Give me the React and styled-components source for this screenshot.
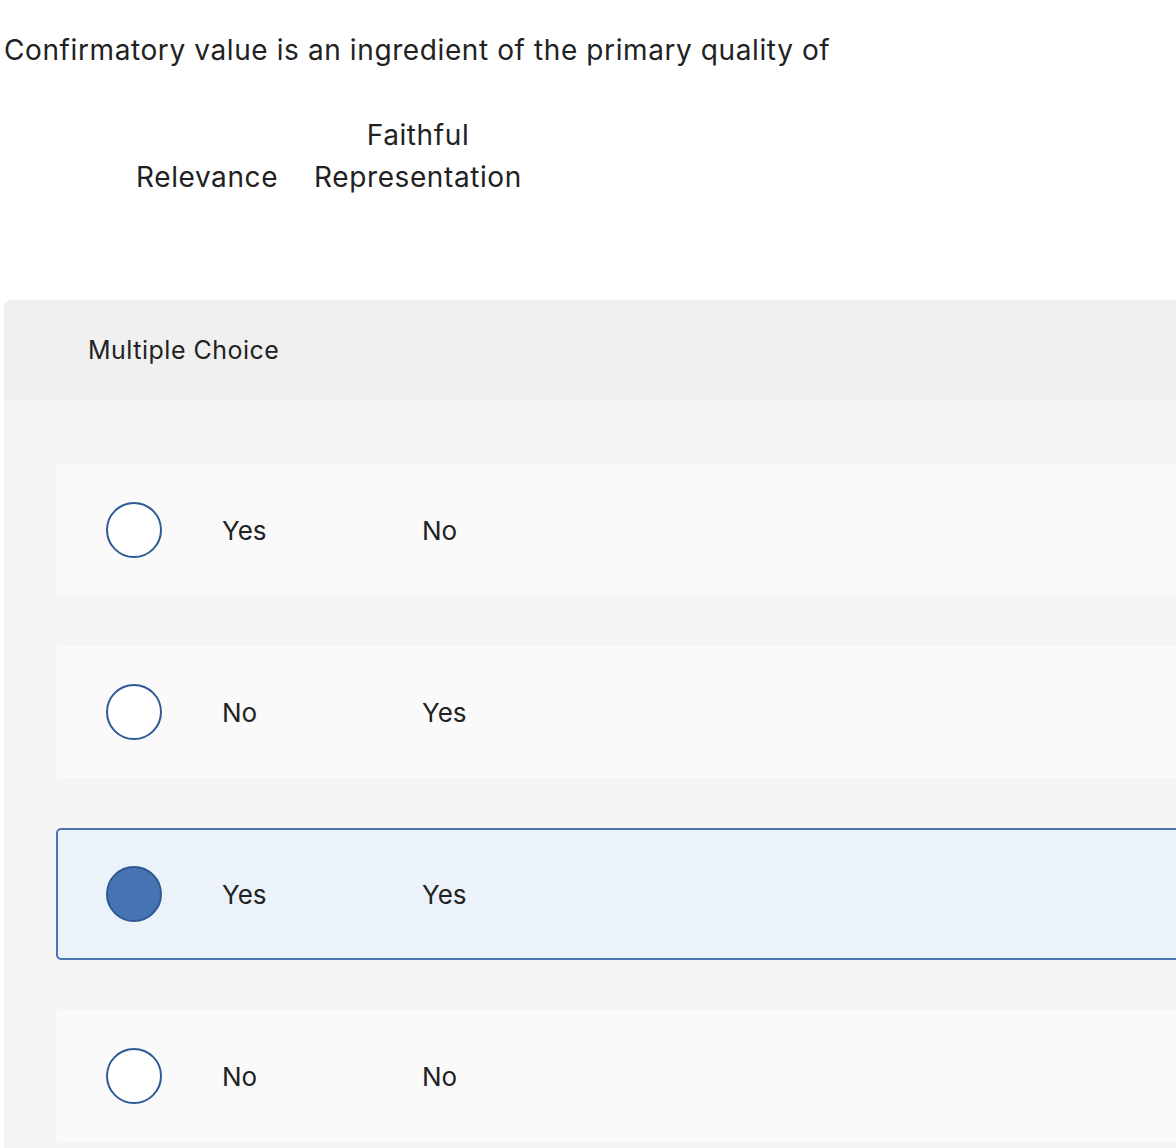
import React from "react";
import styled, { createGlobalStyle } from "styled-components";

const GlobalStyle = createGlobalStyle`
  html, body {
    margin: 0;
    padding: 0;
    background: #fff;
    overflow-x: hidden;
  }
  body {
    font-family: Inter, "Open Sans", sans-serif;
    color: #222;
  }
`;

const Page = styled.div`
  width: 100%;
  overflow: hidden;
`;

const Question = styled.p`
  margin: 0;
  padding: 30px 0 0 4px;
  font-size: 28px;
  line-height: 40px;
  letter-spacing: 0.6px;
  color: #222;
`;

const ValueTable = styled.table`
  margin: 44px 0 0 118px;
  border-collapse: collapse;
  font-size: 28px;
  line-height: 42px;
  letter-spacing: 0.6px;
  color: #222;

  th {
    font-weight: normal;
    text-align: center;
    vertical-align: bottom;
    padding: 0 18px;
  }
`;

const Panel = styled.section`
  margin: 102px -40px 0 4px;
  background: #f5f5f5;
  border-top-left-radius: 6px;
  padding-bottom: 40px;
`;

const PanelHeader = styled.div`
  height: 100px;
  display: flex;
  align-items: center;
  padding-left: 84px;
  background: #f0f0f0;
  border-top-left-radius: 6px;
  font-size: 25px;
  letter-spacing: 0.5px;
  color: #222;
`;

const Options = styled.div`
  display: flex;
  flex-direction: column;
  gap: 50px;
  padding: 64px 0 0 52px;
`;

const Option = styled.label`
  height: 132px;
  box-sizing: border-box;
  display: flex;
  align-items: center;
  padding-left: 48px;
  border-radius: 5px;
  background: ${(p) => (p.$selected ? "#ebf2fa" : "#fafafa")};
  border: 2px solid ${(p) => (p.$selected ? "#4a74b3" : "transparent")};
  cursor: pointer;
  font-size: 26px;
  color: #222;
`;

const Radio = styled.span`
  width: 56px;
  height: 56px;
  box-sizing: border-box;
  border-radius: 50%;
  flex-shrink: 0;
  border: 2px solid #2d5a95;
  background: ${(p) => (p.$checked ? "#4673b1" : "#fff")};
`;

const Cell = styled.span`
  width: ${(p) => p.$width}px;
  flex-shrink: 0;
`;

const choices = [
  ["Yes", "No"],
  ["No", "Yes"],
  ["Yes", "Yes"],
  ["No", "No"],
];

export default function App() {
  const selected = 2;
  return (
    <Page>
      <GlobalStyle />
      <Question>Confirmatory value is an ingredient of the primary quality of</Question>
      <ValueTable>
        <thead>
          <tr>
            <th>Relevance</th>
            <th>
              Faithful
              <br />
              Representation
            </th>
          </tr>
        </thead>
      </ValueTable>
      <Panel>
        <PanelHeader>Multiple Choice</PanelHeader>
        <Options>
          {choices.map(([a, b], i) => (
            <Option key={i} $selected={i === selected}>
              <Radio $checked={i === selected} />
              <Cell $width={60} />
              <Cell $width={200}>{a}</Cell>
              <Cell $width={200}>{b}</Cell>
            </Option>
          ))}
        </Options>
      </Panel>
    </Page>
  );
}
